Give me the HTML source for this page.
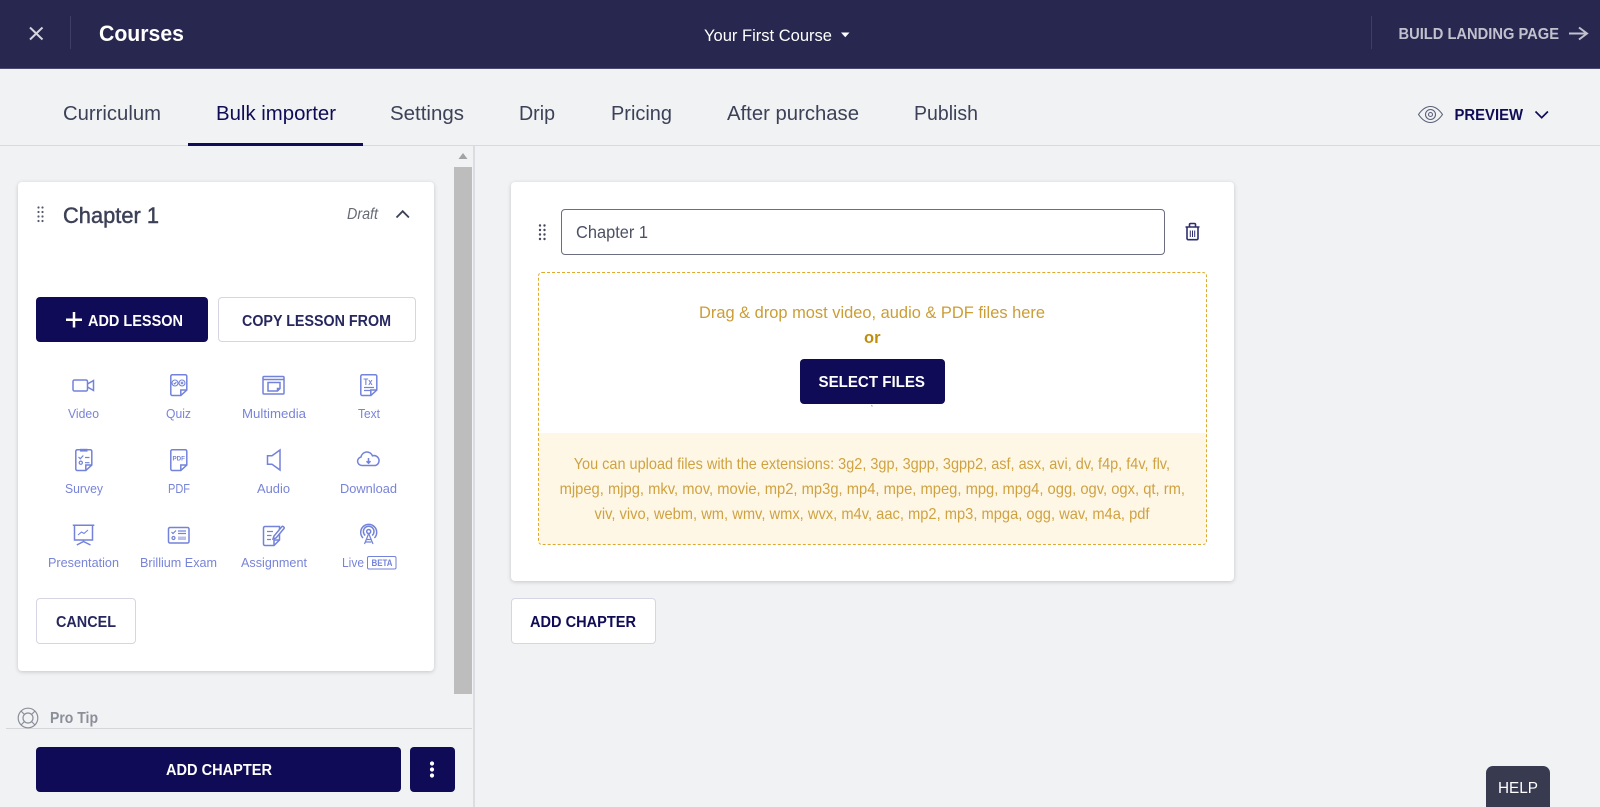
<!DOCTYPE html>
<html lang="en">
<head>
<meta charset="utf-8">
<title>Bulk importer</title>
<style>
html,body{margin:0;padding:0;width:1600px;height:807px;overflow:hidden;background:#f1f2f4;font-family:"Liberation Sans",sans-serif}
.b{position:absolute;box-sizing:border-box}
svg.o{position:absolute;left:0;top:0;filter:blur(.25px)}
svg text{font-family:"Liberation Sans",sans-serif}
.w{fill:#fff}
.tab{font-size:20.5px;fill:#3d4157}
.btn{font-size:16px;font-weight:700}
.lb{font-size:13.3px;fill:#7884d8}
.ic{fill:none;stroke:#7382da;stroke-width:1.5}
.gold{font-size:17px;fill:#cb9d35}
.gold2{font-size:15.6px;fill:#cfa241}
</style>
</head>
<body>
<div class="b" style="left:0;top:0;width:1600px;height:69px;background:#27274f;border-bottom:1px solid #4a4a70"></div>
<div class="b" style="left:70px;top:16px;width:1px;height:33px;background:#3e3e66"></div>
<div class="b" style="left:1371px;top:16px;width:1px;height:33px;background:#3e3e66"></div>
<div class="b" style="left:0;top:144.500px;width:1600px;height:1.500px;background:#d9dae0"></div>
<div class="b" style="left:188px;top:142.500px;width:175px;height:3px;background:#0f0b56"></div>
<div class="b" style="left:473px;top:146px;width:2px;height:661px;background:#dcdde2"></div>
<div class="b" style="left:454px;top:167px;width:18px;height:527px;background:#bdbdbd"></div>

<div class="b" style="left:18px;top:182px;width:416px;height:489px;background:#fff;border-radius:4px;box-shadow:0 1px 4px rgba(0,0,0,.18)"></div>
<div class="b" style="left:36px;top:297px;width:172px;height:45px;background:#0f0b56;border-radius:4px"></div>
<div class="b" style="left:218px;top:297px;width:198px;height:45px;background:#fff;border:1px solid #d5d5e3;border-radius:4px"></div>
<div class="b" style="left:36px;top:598px;width:100px;height:46px;background:#fff;border:1px solid #d5d5e3;border-radius:4px"></div>
<div class="b" style="left:6px;top:728px;width:466px;height:1px;background:#d5d6da"></div>
<div class="b" style="left:36px;top:747px;width:365px;height:45px;background:#0f0b56;border-radius:4px"></div>
<div class="b" style="left:410px;top:747px;width:45px;height:45px;background:#0f0b56;border-radius:4px"></div>

<div class="b" style="left:510.500px;top:182px;width:723px;height:399px;background:#fff;border-radius:4px;box-shadow:0 1px 4px rgba(0,0,0,.18)"></div>
<div class="b" style="left:561px;top:209px;width:604px;height:45.500px;background:#fff;border:1px solid #6b6d80;border-radius:4px"></div>
<div class="b" style="left:538px;top:272px;width:669px;height:273px;border:1px dashed #dfa92e;border-radius:4px;overflow:hidden;background:#fff"><div class="b" style="left:0;top:160px;width:667px;height:111px;background:#fff7e6"></div></div>
<div class="b" style="left:800px;top:359px;width:145px;height:45px;background:#0f0b56;border-radius:4px"></div>
<div class="b" style="left:510.500px;top:598px;width:145.500px;height:46px;background:#fff;border:1px solid #d5d5e3;border-radius:4px"></div>
<div class="b" style="left:1486px;top:766px;width:64px;height:41px;background:#383a50;border-radius:7px 7px 0 0"></div>

<svg class="o" width="1600" height="807" viewBox="0 0 1600 807" xmlns="http://www.w3.org/2000/svg">
<defs>
<path id="doc" d="M2 .7h13a1.500 1.500 0 0 1 1.500 1.500V16l-6 5.500H2A1.500 1.500 0 0 1 .5 20V2.200A1.500 1.500 0 0 1 2 .7zM16.500 16h-6v5.500"/>
</defs>

<!-- header -->
<path d="M30 27.500 42.500 39.500M42.500 27.500 30 39.500" stroke="#d5d5e0" stroke-width="2" fill="none"/>
<text x="99" y="41" class="w" font-size="22.500" font-weight="700" textLength="85" lengthAdjust="spacingAndGlyphs">Courses</text>
<text x="704" y="41" class="w" font-size="17" textLength="128" lengthAdjust="spacingAndGlyphs">Your First Course</text>
<path d="M841 32.500h8.500l-4.250 4.800z" fill="#fff"/>
<text x="1398.500" y="39" fill="#c2c2ce" font-size="16" font-weight="700" textLength="160.500" lengthAdjust="spacingAndGlyphs">BUILD LANDING PAGE</text>
<path d="M1569 33.500H1587M1579 27.500l8 6-8 6" fill="none" stroke="#c2c2ce" stroke-width="2"/>

<!-- tabs -->
<text x="63" y="120" class="tab" textLength="98" lengthAdjust="spacingAndGlyphs">Curriculum</text>
<text x="216" y="120" class="tab" style="fill:#0f0b56" textLength="120" lengthAdjust="spacingAndGlyphs">Bulk importer</text>
<text x="390" y="120" class="tab" textLength="74" lengthAdjust="spacingAndGlyphs">Settings</text>
<text x="519" y="120" class="tab" textLength="36" lengthAdjust="spacingAndGlyphs">Drip</text>
<text x="611" y="120" class="tab" textLength="61" lengthAdjust="spacingAndGlyphs">Pricing</text>
<text x="727" y="120" class="tab" textLength="132" lengthAdjust="spacingAndGlyphs">After purchase</text>
<text x="914" y="120" class="tab" textLength="64" lengthAdjust="spacingAndGlyphs">Publish</text>

<!-- preview -->
<g fill="none" stroke="#5c6079" stroke-width="1.100">
<path d="M1418.500 114.500Q1424 106.500 1430.500 106.500T1442.500 114.500Q1437 122.500 1430.500 122.500T1418.500 114.500z"/>
<circle cx="1430.500" cy="114.500" r="5"/><circle cx="1430.500" cy="114.500" r="2"/>
</g>
<text x="1454.500" y="120" fill="#0f0b56" font-size="16" font-weight="700" textLength="68.500" lengthAdjust="spacingAndGlyphs">PREVIEW</text>
<path d="M1535.500 111.500l6.200 6.200 6.200-6.200" fill="none" stroke="#0f0b56" stroke-width="1.700"/>

<!-- scrollbar arrow -->
<path d="M463 153l4.500 6h-9z" fill="#a3a3a3"/>

<!-- left card -->
<g fill="#555a6b">
<circle cx="38.500" cy="207.500" r="1.100"/><circle cx="42.500" cy="207.500" r="1.100"/>
<circle cx="38.500" cy="212" r="1.100"/><circle cx="42.500" cy="212" r="1.100"/>
<circle cx="38.500" cy="216.500" r="1.100"/><circle cx="42.500" cy="216.500" r="1.100"/>
<circle cx="38.500" cy="221" r="1.100"/><circle cx="42.500" cy="221" r="1.100"/>
</g>
<text x="63" y="223" fill="#3d4157" stroke="#3d4157" stroke-width=".45" font-size="22" textLength="96" lengthAdjust="spacingAndGlyphs">Chapter 1</text>
<text x="347" y="219" fill="#666a75" font-size="15.500" font-style="italic" textLength="31" lengthAdjust="spacingAndGlyphs">Draft</text>
<path d="M396.500 217.500l6.200-6.300 6.200 6.300" fill="none" stroke="#3d4157" stroke-width="1.800"/>

<path d="M66 319.800H82M74 312V327.500" stroke="#fff" stroke-width="2.500" fill="none"/>
<text x="88" y="326" class="btn w" textLength="95" lengthAdjust="spacingAndGlyphs">ADD LESSON</text>
<text x="242" y="326" class="btn" fill="#27275f" textLength="149" lengthAdjust="spacingAndGlyphs">COPY LESSON FROM</text>

<!-- grid icons -->
<g class="ic">
<!-- video -->
<rect x="73" y="380" width="14.500" height="11" rx="1.500"/><path d="M87.500 384l6-3.500v10l-6-3.500"/>
<!-- quiz -->
<use href="#doc" x="170.300" y="374"/>
<circle cx="175" cy="383" r="3" stroke-width="1.100"/><circle cx="182" cy="383" r="3" stroke-width="1.100"/><path d="M170.500 383h1.500M178 383h1M173.700 383l1 1 1.700-2M180.800 381.800l2.400 2.400M183.200 381.800l-2.400 2.400" stroke-width="1"/>
<!-- multimedia -->
<rect x="263" y="376.500" width="21" height="17.500" rx="1"/><path d="M263 379.500h21"/>
<path d="M268 382.500h12v6l-2.500 2.500H268zM280 388.500h-2.500V391"/>
<!-- text -->
<use href="#doc" x="360.300" y="374"/>
<path d="M364 387.500h10M364 390.500h7" stroke-width="1.200"/>
<!-- survey -->
<use href="#doc" x="75.300" y="449"/>
<path d="M80 450.200h7.500" stroke-width="2.800"/>
<path d="M78.500 457l1.800 1.800 3-3.300M85 457.500h4.500M85 462.700h4.500" stroke-width="1.200"/><circle cx="80.800" cy="462.700" r="1.600" stroke-width="1.200"/>
<!-- pdf -->
<use href="#doc" x="170.300" y="449"/>
<!-- audio -->
<path d="M267.500 455.700H272L280 450V470L272 464.300H267.500z"/>
<!-- download -->
<path d="M362 465.500a4.300 4.300 0 0 1-1-8.500 6 6 0 0 1 11.500-1.200 5 5 0 0 1 3 9.700zM368.500 458v5M366.500 461.200l2 2 2-2"/>
<!-- presentation -->
<path d="M72.800 525.300H94.300M74.500 525.300V540H92.500V525.300M83.500 540v1.500M83.500 541.500L76.800 545M83.500 541.500L90.500 545"/>
<path d="M78 535l3.500-3 2.500 1.500 4-3.500" stroke-width="1.100"/>
<!-- brillium -->
<rect x="168.500" y="527.500" width="20.500" height="15.500" rx="1.500"/>
<path d="M171.500 532l1.500 1.500 3-3M178 531h8M178 533.500h8" stroke-width="1.200"/><circle cx="173.500" cy="538" r="1.500" stroke-width="1.200"/>
<path d="M178 536.500h8v3.500h-8z" fill="#b9c0ec" stroke="none"/>
<!-- assignment -->
<path d="M265 526.500H279.500V540l-5.500 5.500H265a1.500 1.500 0 0 1-1.500-1.500V528a1.500 1.500 0 0 1 1.500-1.500zM279.500 540H274v5.500"/>
<path d="M267 531.500h6M267 535.500h4.500M267 539.500h4" stroke-width="1.200"/>
<path d="M274 536l-1 3 3-1 8-9.500c.8-1-1.200-2.800-2-2z" fill="#fff"/>
<!-- live -->
<circle cx="368.700" cy="531.500" r="2"/><path d="M365.200 535.500a5.300 5.300 0 1 1 7 0M363 538a8 8 0 1 1 11.400 0"/>
<path d="M368.700 533.500L364.500 544M368.700 533.500L373 544M366.300 539.500h4.800M365.500 542l5.800 0" stroke-width="1.200"/>
</g>
<text x="363.500" y="385" font-size="9" font-weight="700" fill="#7382da" textLength="9" lengthAdjust="spacingAndGlyphs">Tx</text>
<text x="172.500" y="460.500" font-size="6.300" font-weight="700" fill="#7382da" textLength="12.500" lengthAdjust="spacingAndGlyphs">PDF</text>

<!-- grid labels -->
<text x="68" y="418" class="lb" textLength="31" lengthAdjust="spacingAndGlyphs">Video</text>
<text x="166" y="418" class="lb" textLength="25" lengthAdjust="spacingAndGlyphs">Quiz</text>
<text x="242" y="418" class="lb" textLength="64" lengthAdjust="spacingAndGlyphs">Multimedia</text>
<text x="358" y="418" class="lb" textLength="22" lengthAdjust="spacingAndGlyphs">Text</text>
<text x="65" y="493" class="lb" textLength="38" lengthAdjust="spacingAndGlyphs">Survey</text>
<text x="168" y="493" class="lb" textLength="22" lengthAdjust="spacingAndGlyphs">PDF</text>
<text x="257" y="493" class="lb" textLength="33" lengthAdjust="spacingAndGlyphs">Audio</text>
<text x="340" y="493" class="lb" textLength="57" lengthAdjust="spacingAndGlyphs">Download</text>
<text x="48" y="567" class="lb" textLength="71" lengthAdjust="spacingAndGlyphs">Presentation</text>
<text x="140" y="567" class="lb" textLength="77" lengthAdjust="spacingAndGlyphs">Brillium Exam</text>
<text x="241" y="567" class="lb" textLength="66" lengthAdjust="spacingAndGlyphs">Assignment</text>
<text x="342" y="567" class="lb" textLength="22" lengthAdjust="spacingAndGlyphs">Live</text>
<rect x="367.500" y="556.500" width="28.500" height="12.500" rx="1.500" fill="none" stroke="#7382da" stroke-width="1"/>
<text x="371.500" y="566" font-size="9" font-weight="700" fill="#7382da" textLength="21" lengthAdjust="spacingAndGlyphs">BETA</text>

<text x="56" y="627" class="btn" fill="#27275f" textLength="60" lengthAdjust="spacingAndGlyphs">CANCEL</text>

<!-- pro tip -->
<g fill="none" stroke="#8b8e99" stroke-width="1.200">
<circle cx="28" cy="718" r="9.800"/><circle cx="28" cy="718" r="5"/>
<path d="M21 711l3.500 3.500M35 711l-3.500 3.500M21 725l3.500-3.500M35 725l-3.500-3.500"/>
</g>
<text x="50" y="723" fill="#8b8e99" font-size="15.500" font-weight="700" textLength="48" lengthAdjust="spacingAndGlyphs">Pro Tip</text>

<text x="166" y="775" class="w" font-size="16" font-weight="700" textLength="106" lengthAdjust="spacingAndGlyphs">ADD CHAPTER</text>
<g fill="#fff"><circle cx="432" cy="763.500" r="2.100"/><circle cx="432" cy="769.500" r="2.100"/><circle cx="432" cy="775.500" r="2.100"/></g>

<!-- right card -->
<g fill="#44485c">
<circle cx="540" cy="225.500" r="1.200"/><circle cx="544.500" cy="225.500" r="1.200"/>
<circle cx="540" cy="230" r="1.200"/><circle cx="544.500" cy="230" r="1.200"/>
<circle cx="540" cy="234.500" r="1.200"/><circle cx="544.500" cy="234.500" r="1.200"/>
<circle cx="540" cy="239" r="1.200"/><circle cx="544.500" cy="239" r="1.200"/>
</g>
<text x="576" y="238" fill="#4d5163" font-size="17.500" textLength="72" lengthAdjust="spacingAndGlyphs">Chapter 1</text>
<g fill="none" stroke="#2e2e6e" stroke-width="1.600">
<path d="M1185.500 227h14M1189.500 227v-2.500a1 1 0 0 1 1-1h4a1 1 0 0 1 1 1V227"/>
<path d="M1187 227v11.500a1.200 1.200 0 0 0 1.200 1.200h8.600a1.200 1.200 0 0 0 1.200-1.200V227"/>
<path d="M1190.300 230.500v6.500M1192.500 230.500v6.500M1194.700 230.500v6.500" stroke-width="1"/>
</g>

<text x="699" y="318" class="gold" textLength="346" lengthAdjust="spacingAndGlyphs">Drag &amp; drop most video, audio &amp; PDF files here</text>
<text x="864" y="343" font-size="17" font-weight="700" fill="#c08e0c" textLength="16.500" lengthAdjust="spacingAndGlyphs">or</text>
<text x="818.500" y="387" class="btn w" textLength="106.500" lengthAdjust="spacingAndGlyphs">SELECT FILES</text>
<path d="M871.500 405l.8 1.500" stroke="#999" stroke-width="1" fill="none"/>

<text x="573.700" y="469" class="gold2" textLength="596.300" lengthAdjust="spacingAndGlyphs">You can upload files with the extensions: 3g2, 3gp, 3gpp, 3gpp2, asf, asx, avi, dv, f4p, f4v, flv,</text>
<text x="559.600" y="494" class="gold2" textLength="625.400" lengthAdjust="spacingAndGlyphs">mjpeg, mjpg, mkv, mov, movie, mp2, mp3g, mp4, mpe, mpeg, mpg, mpg4, ogg, ogv, ogx, qt, rm,</text>
<text x="594.500" y="519" class="gold2" textLength="555" lengthAdjust="spacingAndGlyphs">viv, vivo, webm, wm, wmv, wmx, wvx, m4v, aac, mp2, mp3, mpga, ogg, wav, m4a, pdf</text>

<text x="530" y="627" class="btn" fill="#0f0b56" textLength="106" lengthAdjust="spacingAndGlyphs">ADD CHAPTER</text>

<text x="1498" y="793" class="w" font-size="16" textLength="40" lengthAdjust="spacingAndGlyphs">HELP</text>
</svg>
</body>
</html>
